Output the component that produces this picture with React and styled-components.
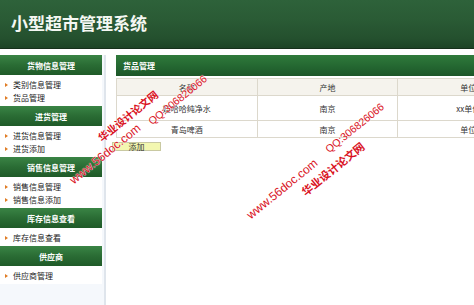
import React from 'react';
import styled, {createGlobalStyle} from 'styled-components';

const GlobalStyle = createGlobalStyle`
  html, body {
    margin: 0;
    padding: 0;
    background: #ffffff;
    overflow: hidden;
  }
  body {
    font-family: 'Noto Sans CJK SC', 'Liberation Sans', sans-serif;
  }
`;

const Page = styled.div`
  position: relative;
  width: 474px;
  height: 305px;
  overflow: hidden;
  background: #ffffff;
`;

const Header = styled.div`
  height: 48px;
  display: flex;
  align-items: center;
  padding-left: 11px;
  background: linear-gradient(180deg, #2e623a 0%, #2a5b35 40%, #24502e 80%, #1d4426 100%);
  border-bottom: 1px solid #16301b;
`;

const Title = styled.h1`
  margin: 0 0 4px 0;
  font-family: 'Noto Sans CJK SC', sans-serif;
  font-size: 17px;
  font-weight: 700;
  color: #f4f7f2;
`;

const Body = styled.div`
  display: flex;
  padding-top: 6px;
  height: 250px;
`;

const Sidebar = styled.div`
  width: 102px;
  padding-right: 2px;
  border-right: 2px solid #dfe5ec;
  background: #f5f8fc;
  height: 260px;
`;

const MenuHead = styled.div`
  height: 20px;
  display: flex;
  align-items: center;
  justify-content: center;
  background: linear-gradient(180deg, #3a8445 0%, #2a6c34 50%, #1f5a28 100%);
  color: #ffffff;
  font-size: 8px;
  font-weight: 700;
`;

const MenuList = styled.ul`
  list-style: none;
  margin: 0;
  padding: 3px 0 2px 0;
  background: #ffffff;
`;

const MenuItem = styled.li`
  display: flex;
  align-items: center;
  height: 13px;
  padding-left: 5px;
  font-size: 8px;
  color: #222222;

  &::before {
    content: '';
    width: 0;
    height: 0;
    border-top: 2.5px solid transparent;
    border-bottom: 2.5px solid transparent;
    border-left: 3px solid #e07c24;
    margin-right: 5px;
  }
`;

const Main = styled.div`
  flex: 1;
  padding-left: 6px;
  min-width: 0;
`;

const Panel = styled.div`
  margin-left: 4px;
  width: 440px;
`;

const PanelHead = styled.div`
  height: 21px;
  display: flex;
  align-items: center;
  padding-left: 7px;
  background: linear-gradient(180deg, #2f7a3b 0%, #236530 60%, #1d5628 100%);
  color: #ffffff;
  font-size: 8px;
  font-weight: 700;
`;

const Table = styled.table`
  margin-top: 2px;
  border-collapse: collapse;
  width: 423px;
  table-layout: fixed;
  font-size: 8px;
  color: #333333;
`;

const Th = styled.th`
  height: 16px;
  padding: 0;
  font-weight: 400;
  background: #f5f3ed;
  border: 1px solid #dcd8cc;
  text-align: center;
`;

const Td = styled.td`
  height: ${p => p.$h || 16}px;
  padding: 0;
  border: 1px solid #dcd8cc;
  text-align: center;
  white-space: nowrap;
`;

const AddButton = styled.button`
  display: block;
  margin-top: 4px;
  width: 49px;
  height: 9px;
  padding: 0;
  border: 1px solid #c9c9a2;
  background: #f3f7b0;
  font-family: 'Noto Sans CJK SC', sans-serif;
  font-size: 8px;
  line-height: 7px;
  color: #333333;
`;

const Mark = styled.span`
  position: absolute;
  left: ${p => p.$x}px;
  top: ${p => p.$y - p.$size}px;
  font-size: ${p => p.$size}px;
  line-height: 1;
  font-weight: ${p => (p.$bold ? 700 : 400)};
  font-family: 'Liberation Sans', 'Noto Sans CJK SC', sans-serif;
  color: #d9121e;
  white-space: nowrap;
  transform-origin: left bottom;
  transform: rotate(-39deg);
  text-shadow: 0 0 1px #ffffff, 0 0 1px #ffffff;
  pointer-events: none;
`;

const menu = [
  {title: '货物信息管理', items: ['类别信息管理', '货品管理']},
  {title: '进货管理', items: ['进货信息管理', '进货添加']},
  {title: '销售信息管理', items: ['销售信息管理', '销售信息添加']},
  {title: '库存信息查看', items: ['库存信息查看']},
  {title: '供应商', items: ['供应商管理']},
];

const rows = [
  {name: '娃哈哈纯净水', place: '南京', unit: 'xx单位', h: 24},
  {name: '青岛啤酒', place: '南京', unit: '单位', h: 16},
];

const marks = [
  {text: '华业设计论文网', x: 103, y: 143, size: 10.5, bold: true},
  {text: 'QQ:306826066', x: 153, y: 126, size: 10.5},
  {text: 'www.56doc.com', x: 75, y: 186, size: 12},
  {text: 'www.56doc.com', x: 252, y: 221, size: 12},
  {text: 'QQ:306826066', x: 330, y: 154, size: 10.5},
  {text: '华业设计论文网', x: 307, y: 198, size: 11, bold: true},
];

const App = () => (
  <Page>
    <GlobalStyle />
    <Header>
      <Title>小型超市管理系统</Title>
    </Header>
    <Body>
      <Sidebar>
        {menu.map(group => (
          <div key={group.title}>
            <MenuHead>{group.title}</MenuHead>
            <MenuList>
              {group.items.map(item => (
                <MenuItem key={item}>{item}</MenuItem>
              ))}
            </MenuList>
          </div>
        ))}
      </Sidebar>
      <Main>
        <Panel>
          <PanelHead>货品管理</PanelHead>
          <Table>
            <thead>
              <tr>
                <Th>名称</Th>
                <Th>产地</Th>
                <Th>单位</Th>
              </tr>
            </thead>
            <tbody>
              {rows.map(r => (
                <tr key={r.name}>
                  <Td $h={r.h}>{r.name}</Td>
                  <Td $h={r.h}>{r.place}</Td>
                  <Td $h={r.h}>{r.unit}</Td>
                </tr>
              ))}
            </tbody>
          </Table>
        </Panel>
        <AddButton>添加</AddButton>
      </Main>
    </Body>
    {marks.map((m, i) => (
      <Mark key={i} $x={m.x} $y={m.y} $size={m.size} $bold={m.bold}>
        {m.text}
      </Mark>
    ))}
  </Page>
);

export default App;
